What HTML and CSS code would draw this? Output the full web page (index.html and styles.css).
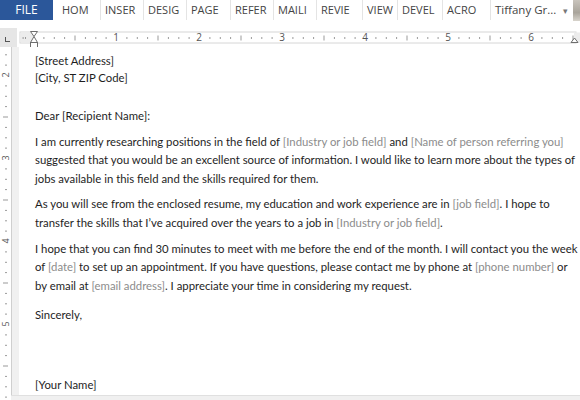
FILE: index.html
```html
<!DOCTYPE html>
<html>
<head>
<meta charset="utf-8">
<link rel="stylesheet" href="styles.css">
</head>
<body>
<div class="app">
  <div class="ribbon">
    <div class="tab file">FILE</div>
    <div class="tab first">HOM</div>
    <div class="tab">INSER</div>
    <div class="tab">DESIG</div>
    <div class="tab wide1">PAGE</div>
    <div class="tab">REFER</div>
    <div class="tab">MAILI</div>
    <div class="tab wide3">REVIE</div>
    <div class="tab short">VIEW</div>
    <div class="tab wide2">DEVEL</div>
    <div class="tab wide5">ACRO</div>
    <div class="user">Tiffany Gr... <span class="caret">▾</span></div>
    <div class="avatar"></div>
  </div>

  <div class="ruler-row">
    <div class="corner"><span class="tabstop"></span></div>
    <svg class="hruler" width="563" height="17" viewBox="17 30 563 17">
      <defs>
        <pattern id="hticks" patternUnits="userSpaceOnUse" x="33" y="30" width="83" height="17">
          <rect x="10.4" y="7" width="1" height="2" fill="#9a9a9a"/>
          <rect x="20.8" y="7" width="1" height="2" fill="#9a9a9a"/>
          <rect x="31.1" y="7" width="1" height="2" fill="#9a9a9a"/>
          <rect x="41.5" y="5.5" width="1" height="5" fill="#9a9a9a"/>
          <rect x="51.9" y="7" width="1" height="2" fill="#9a9a9a"/>
          <rect x="62.3" y="7" width="1" height="2" fill="#9a9a9a"/>
          <rect x="72.6" y="7" width="1" height="2" fill="#9a9a9a"/>
        </pattern>
      </defs>
      <rect x="17" y="30" width="563" height="17" fill="#ffffff"/>
      <rect x="20" y="32" width="556" height="11" fill="#ffffff" stroke="#d6d6d6" stroke-width="1"/>
      <rect x="20.5" y="32.5" width="12.5" height="10" fill="#ececec"/>
      <rect x="574" y="32.5" width="6" height="10" fill="#ececec"/>
      <rect x="21" y="30" width="553" height="17" fill="url(#hticks)"/>
      <rect x="25" y="37" width="1" height="2" fill="#9a9a9a"/>
      <g class="rnum">
        <text x="116" y="41">1</text>
        <text x="199" y="41">2</text>
        <text x="282" y="41">3</text>
        <text x="365" y="41">4</text>
        <text x="448" y="41">5</text>
        <text x="531" y="41">6</text>
      </g>
      <path d="M30.5 31.5 H37.5 L34 36.5 Z" fill="#fff" stroke="#6e6e6e" stroke-width="1"/>
      <path d="M34 36.5 L37.5 42.5 H30.5 Z" fill="#fff" stroke="#6e6e6e" stroke-width="1"/>
      <rect x="30.5" y="42.5" width="7" height="5" fill="#fff" stroke="#6e6e6e" stroke-width="1"/>
      <path d="M571 42.5 L574.5 38 L578 42.5 Z" fill="#fff" stroke="#6e6e6e" stroke-width="1"/>
    </svg>
  </div>

  <div class="workspace">
    <svg class="vruler" width="11" height="353" viewBox="0 47 11 353">
      <defs>
        <pattern id="vticks" patternUnits="userSpaceOnUse" x="0" y="-8" width="11" height="83">
          <rect x="5" y="10.4" width="2" height="1" fill="#9a9a9a"/>
          <rect x="5" y="20.8" width="2" height="1" fill="#9a9a9a"/>
          <rect x="5" y="31.1" width="2" height="1" fill="#9a9a9a"/>
          <rect x="3" y="41.5" width="5" height="1" fill="#9a9a9a"/>
          <rect x="5" y="51.9" width="2" height="1" fill="#9a9a9a"/>
          <rect x="5" y="62.3" width="2" height="1" fill="#9a9a9a"/>
          <rect x="5" y="72.6" width="2" height="1" fill="#9a9a9a"/>
        </pattern>
      </defs>
      <rect x="0" y="47" width="11" height="353" fill="#ffffff"/>
      <rect x="0" y="47" width="11" height="353" fill="url(#vticks)"/>
      <rect x="0" y="47" width="11" height="6" fill="#ffffff"/>
      <g class="vnum">
        <text transform="translate(9 75) rotate(-90)">2</text>
        <text transform="translate(9 158) rotate(-90)">3</text>
        <text transform="translate(9 241) rotate(-90)">4</text>
        <text transform="translate(9 324) rotate(-90)">5</text>
      </g>
    </svg>
    <div class="gutter"></div>
    <div class="page">
      <div class="address">
        <p>[Street Address]</p>
        <p>[City, ST ZIP Code]</p>
      </div>
      <p class="para">Dear [Recipient Name]:</p>
      <p class="para">I am currently researching positions in the field of <span class="ph">[Industry or job field]</span> and <span class="ph">[Name of person referring you]</span><br>suggested that you would be an excellent source of information. I would like to learn more about the types of<br>jobs available in this field and the skills required for them.</p>
      <p class="para">As you will see from the enclosed resume, my education and work experience are in <span class="ph">[job field]</span>. I hope to<br>transfer the skills that I’ve acquired over the years to a job in <span class="ph">[Industry or job field]</span>.</p>
      <p class="para">I hope that you can find 30 minutes to meet with me before the end of the month. I will contact you the week<br>of <span class="ph">[date]</span> to set up an appointment. If you have questions, please contact me by phone at <span class="ph">[phone number]</span> or<br>by email at <span class="ph">[email address]</span>. I appreciate your time in considering my request.</p>
      <p class="para closing">Sincerely,</p>
      <p class="para signature">[Your Name]</p>
    </div>
  </div>
  <div class="bottom"></div>
</div>
</body>
</html>
```

FILE: styles.css
```css
html, body {
  margin: 0;
  padding: 0;
  background: #ffffff;
}

.app {
  width: 580px;
  height: 400px;
  overflow: hidden;
  position: relative;
  background: #ffffff;
  font-family: "Open Sans", "Noto Sans", sans-serif;
}

.ribbon {
  height: 28px;
  display: flex;
  align-items: flex-start;
  background: #ffffff;
}

.tab {
  flex: none;
  box-sizing: border-box;
  width: 43px;
  height: 20px;
  line-height: 20px;
  font-size: 11px;
  color: #444444;
  padding-left: 4px;
  border-left: 1px solid #e4e4e4;
  white-space: nowrap;
  overflow: hidden;
}

.tab.first {
  border-left: none;
  margin-left: 5px;
  width: 42px;
}

.tab.wide1 { width: 44px; }
.tab.wide2 { width: 45px; }
.tab.wide3 { width: 46px; }
.tab.wide5 { width: 48px; }
.tab.short { width: 35px; }

.tab.file {
  background: #2b579a;
  color: #ffffff;
  width: 53px;
  padding: 0;
  text-align: center;
  border-left: none;
  font-size: 12px;
}

.user {
  flex: 1;
  box-sizing: border-box;
  height: 20px;
  line-height: 20px;
  font-size: 11.5px;
  color: #444444;
  padding-left: 4px;
  border-left: 1px solid #e4e4e4;
  white-space: nowrap;
  overflow: hidden;
}

.caret {
  font-size: 9px;
  color: #777777;
  margin-left: 4px;
}

.avatar {
  flex: none;
  width: 7px;
  height: 21px;
  background: linear-gradient(180deg, #c9c4bc, #a9a49b 60%, #d8d4cc);
}

.ruler-row {
  height: 19px;
  display: flex;
}

.corner {
  flex: none;
  width: 17px;
  height: 19px;
  background: #e6e6e6;
  position: relative;
}

.tabstop {
  position: absolute;
  left: 5px;
  top: 9px;
  width: 4px;
  height: 4px;
  border-left: 1.5px solid #555555;
  border-bottom: 1.5px solid #555555;
}

.hruler {
  display: block;
  flex: none;
  margin-top: 2px;
  overflow: visible;
}

.rnum text {
  font-family: "Open Sans", sans-serif;
  font-size: 10px;
  fill: #555555;
  text-anchor: middle;
}

.vnum text {
  font-family: "Open Sans", sans-serif;
  font-size: 9px;
  fill: #555555;
  text-anchor: middle;
}

.workspace {
  display: flex;
  height: 348px;
}

.vruler {
  display: block;
  flex: none;
  overflow: visible;
}

.gutter {
  width: 7px;
  flex: none;
  background: #f0f0f0;
  border-left: 1px solid #cfcfcf;
}

.page {
  flex: 1;
  background: #ffffff;
  padding: 5px 0 0 16px;
  font-family: "Lato", sans-serif;
  font-size: 11.35px;
  color: #1e1e1e;
  white-space: nowrap;
}

.page p {
  margin: 0;
}

.address p {
  line-height: 17px;
}

.para {
  line-height: 18.6px;
}

.address + .para {
  margin-top: 21px;
}

.para + .para {
  margin-top: 7px;
}

.para.closing {
  margin-top: 10.5px;
}

.para.signature {
  margin-top: 52px;
}

.ph {
  color: #8c8c8c;
}

.bottom {
  height: 5px;
  background: #f0f0f0;
  border-top: 1px solid #e0e0e0;
}
```
